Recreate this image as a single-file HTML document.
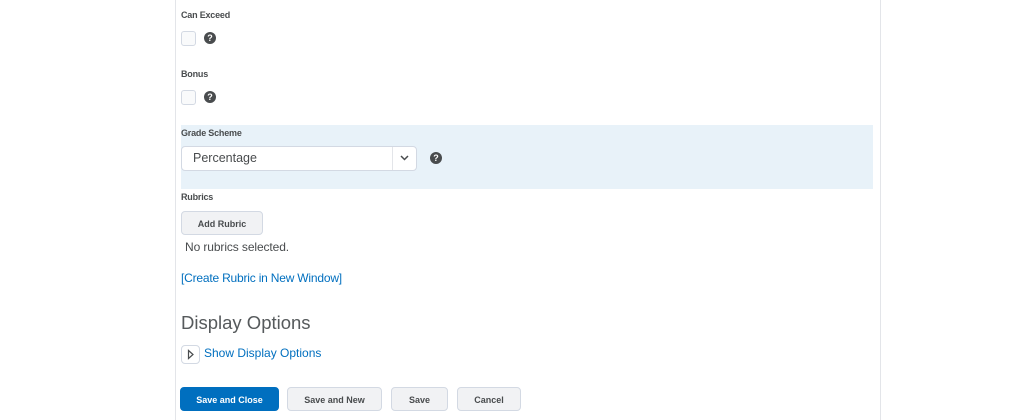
<!DOCTYPE html>
<html><head><style>
body{margin:0;width:1024px;height:420px;background:#fff;font-family:"Liberation Sans",sans-serif;position:relative;overflow:hidden;color:#494c4e}
.a{position:absolute}
.vl{position:absolute;top:0;height:420px;width:1px;background:#e3e5e9}
.lbl{font-size:9px;font-weight:bold;color:#494c4e;letter-spacing:-0.2px}
.cb{width:13px;height:13px;border:1px solid #d3d9e3;border-radius:3px;background:#f9fafb}
.q{width:12px;height:12px;border-radius:50%;background:#494c4e;color:#fff;font-size:9px;font-weight:bold;text-align:center;line-height:12px}
.btn{position:absolute;height:24px;border:1px solid #d3d9e3;border-radius:4px;background:#f1f2f4;font-size:9px;font-weight:bold;color:#494c4e;text-align:center;line-height:24px;box-sizing:border-box}
</style></head><body>
<div class="vl" style="left:175px"></div>
<div class="vl" style="left:880px"></div>
<div class="a lbl" style="left:181px;top:10px">Can Exceed</div>
<div class="a cb" style="left:181px;top:31px"></div>
<div class="a q" style="left:204px;top:32px">?</div>
<div class="a lbl" style="left:181px;top:69px">Bonus</div>
<div class="a cb" style="left:181px;top:90px"></div>
<div class="a q" style="left:204px;top:91px">?</div>
<div class="a" style="left:181px;top:125px;width:692px;height:64px;background:#e8f2f9"></div>
<div class="a lbl" style="left:181px;top:128px">Grade Scheme</div>
<div class="a" style="left:181px;top:146px;width:236px;height:25px;background:#fff;border:1px solid #d3d9e3;border-radius:4px;box-sizing:border-box"></div>
<div class="a" style="left:392px;top:147px;width:1px;height:23px;background:#e3e5e9"></div>
<div class="a" style="left:193px;top:151px;font-size:12.5px;color:#494c4e">Percentage</div>
<svg class="a" style="left:400px;top:155px" width="9" height="6"><path d="M1 1L4.5 4.5L8 1" stroke="#494c4e" stroke-width="1.5" fill="none"/></svg>
<div class="a q" style="left:430px;top:152px">?</div>
<div class="a lbl" style="left:181px;top:192px">Rubrics</div>
<div class="btn" style="left:181px;top:211px;width:82px">Add Rubric</div>
<div class="a" style="left:185px;top:240px;font-size:12px;letter-spacing:-0.1px">No rubrics selected.</div>
<div class="a" style="left:181px;top:271px;font-size:12px;color:#006fbf;letter-spacing:-0.2px">[Create Rubric in New Window]</div>
<div class="a" style="left:181px;top:312px;font-size:18.5px;color:#565a5c">Display Options</div>
<div class="a" style="left:181px;top:345px;width:19px;height:19px;border:1px solid #d3d9e3;border-radius:4px;box-sizing:border-box"></div>
<svg class="a" style="left:187px;top:349px" width="8" height="11"><path d="M1.5 1.5L6 5.5L1.5 9.5Z" stroke="#494c4e" stroke-width="1.2" fill="none"/></svg>
<div class="a" style="left:204px;top:346px;font-size:12px;color:#006fbf">Show Display Options</div>
<div class="btn" style="left:180px;top:387px;width:99px;background:#006fbf;border-color:#006fbf;color:#fff">Save and Close</div>
<div class="btn" style="left:287px;top:387px;width:95px">Save and New</div>
<div class="btn" style="left:391px;top:387px;width:57px">Save</div>
<div class="btn" style="left:457px;top:387px;width:64px">Cancel</div>
</body></html>
